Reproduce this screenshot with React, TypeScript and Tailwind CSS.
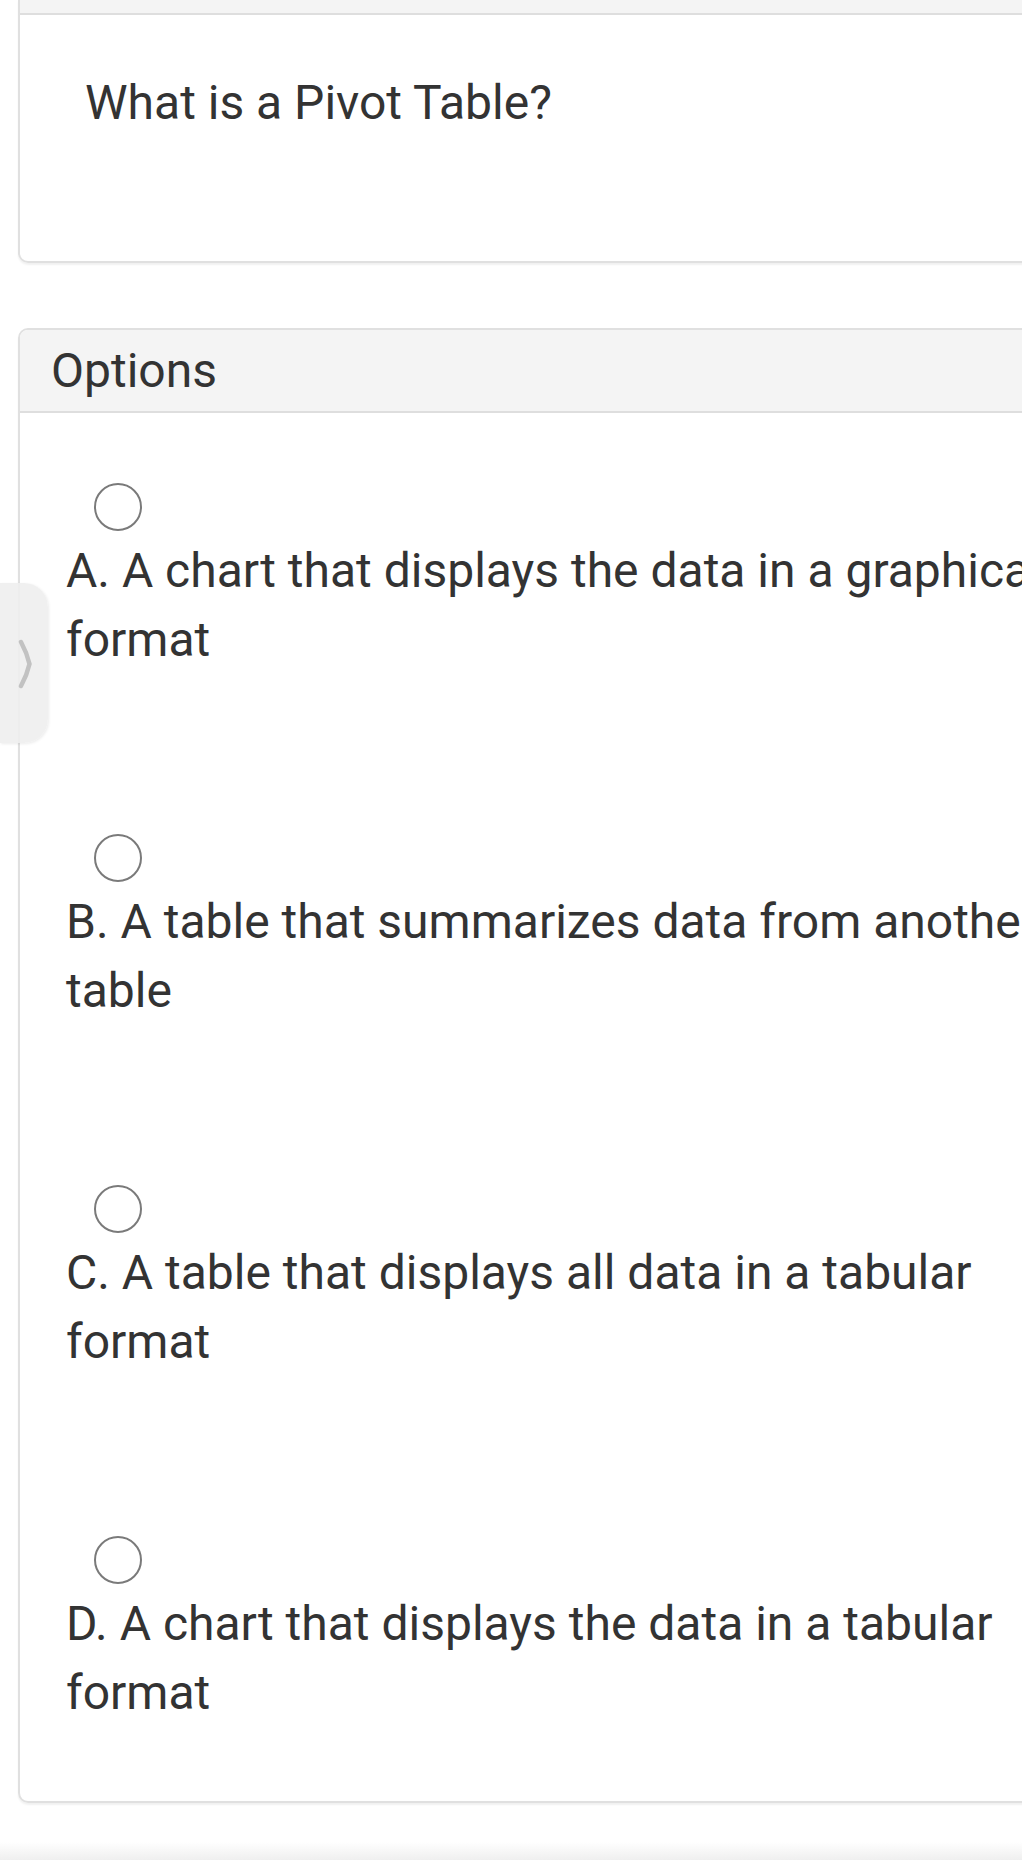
import React from "react";

const options = [
  "A. A chart that displays the data in a graphical format",
  "B. A table that summarizes data from another table",
  "C. A table that displays all data in a tabular format",
  "D. A chart that displays the data in a tabular format",
];

export default function App() {
  return (
    <div className="relative w-[1022px] h-[1860px] overflow-hidden bg-white font-['Roboto','Noto_Sans',sans-serif] text-[#333333]">
      <div className="flex flex-col pl-[18px]">
        {/* Question card (top cut off) */}
        <div className="w-[1130px] border-2 border-t-0 border-[#e0e0e0] rounded-b-[10px] shadow-[0_2px_2px_rgba(0,0,0,0.06)] overflow-hidden">
          <div className="h-[15px] bg-[#f4f4f4] border-b-2 border-[#dedede]" />
          <div className="h-[246px] pl-[65px] pt-[53px]">
            <p className="text-[48px] leading-[69px]">What is a Pivot Table?</p>
          </div>
        </div>

        {/* Options card */}
        <div className="mt-[65px] w-[1130px] border-2 border-[#e0e0e0] rounded-[10px] shadow-[0_2px_2px_rgba(0,0,0,0.06)] overflow-hidden">
          <div className="h-[83px] bg-[#f4f4f4] border-b-2 border-[#dedede] flex items-center pl-[31px]">
            <span className="text-[48px] leading-[69px]">Options</span>
          </div>
          <div className="flex flex-col gap-[160px] pl-[46px] pt-[70px] pb-[74px]">
            {options.map((o) => (
              <div key={o} className="flex flex-col">
                <div className="ml-[28px] w-[48px] h-[48px] rounded-full border-[2.5px] border-[#7a7a7a] bg-white" />
                <p className="mt-[5px] w-[1024px] text-[48px] leading-[69px]">{o}</p>
              </div>
            ))}
          </div>
        </div>
      </div>

      {/* Side tab */}
      <div className="absolute left-0 top-[583px] w-[48px] h-[160px] rounded-r-[24px] bg-[#eeeeee]/90 shadow-[1px_1px_3px_rgba(0,0,0,0.08)]">
        <svg className="absolute left-[17px] top-[56px]" width="16" height="50" viewBox="0 0 16 50">
          <path d="M4 3 Q10 14 12.5 25 Q10 36 4 47" fill="none" stroke="#c2c2c2" strokeWidth="4.5" strokeLinecap="round" />
        </svg>
      </div>

      {/* Bottom shade */}
      <div className="absolute left-0 bottom-0 w-full h-[18px] bg-linear-to-b from-white to-[#efefef]" />
    </div>
  );
}
